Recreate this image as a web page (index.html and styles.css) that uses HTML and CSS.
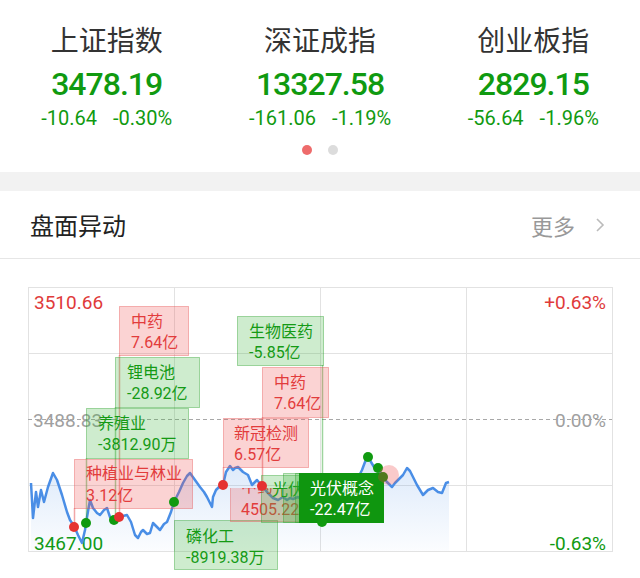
FILE: index.html
```html
<!DOCTYPE html>
<html lang="zh-CN">
<head>
    <meta charset="UTF-8">
    <meta name="viewport" content="width=device-width, initial-scale=1.0">
    <title>盘面异动</title>
    <link rel="stylesheet" href="styles.css">
</head>
<body>
    <div class="indices">
        <div class="index">
            <div class="index-name">上证指数</div>
            <div class="index-value">3478.19</div>
            <div class="index-change"><span>-10.64</span><span>-0.30%</span></div>
        </div>
        <div class="index">
            <div class="index-name">深证成指</div>
            <div class="index-value">13327.58</div>
            <div class="index-change"><span>-161.06</span><span>-1.19%</span></div>
        </div>
        <div class="index">
            <div class="index-name">创业板指</div>
            <div class="index-value">2829.15</div>
            <div class="index-change"><span>-56.64</span><span>-1.96%</span></div>
        </div>
    </div>

    <div class="pager">
        <span class="dot active"></span>
        <span class="dot"></span>
    </div>

    <div class="band"></div>

    <div class="section-head">
        <h2 class="section-title">盘面异动</h2>
        <a class="more">更多
            <svg width="10" height="16" viewBox="0 0 10 16"><path d="M2 2 L8 8 L2 14" /></svg>
        </a>
    </div>

    <!-- intraday chart, viewBox uses page coordinates -->
    <svg class="chart" width="640" height="319" viewBox="0 259 640 319">
        <defs>
            <linearGradient id="area" x1="0" y1="0" x2="0" y2="1">
                <stop offset="0" stop-color="#4a8ee6" stop-opacity="0.2"/>
                <stop offset="1" stop-color="#4a8ee6" stop-opacity="0.02"/>
            </linearGradient>
            <clipPath id="clip-low"><rect x="220" y="488" width="79" height="40"/></clipPath>
        </defs>

        <!-- grid -->
        <rect class="grid" x="28.5" y="287.5" width="584" height="264"/>
        <line class="grid" x1="174.5" y1="287" x2="174.5" y2="551"/>
        <line class="grid" x1="320.5" y1="287" x2="320.5" y2="551"/>
        <line class="grid" x1="466.5" y1="287" x2="466.5" y2="551"/>
        <line class="grid" x1="28" y1="353.5" x2="612" y2="353.5"/>
        <line class="grid" x1="28" y1="485.5" x2="612" y2="485.5"/>

        <!-- axis labels -->
        <text class="axis up" x="34" y="302">3510.66</text>
        <text class="axis up end" x="606" y="302">+0.63%</text>
        <text class="axis flat" x="33" y="420">3488.83</text>
        <text class="axis flat end" x="606" y="420">0.00%</text>
        <text class="axis down" x="34" y="543">3467.00</text>
        <text class="axis down end" x="606" y="543">-0.63%</text>
        <line class="base" x1="28" y1="419.5" x2="612" y2="419.5"/>

        <!-- price line -->
        <path class="area" d="M31 483 L33 518 L36 492 L38 507 L41 490 L44 502 L48 487 L53 473 L57 480 L62 495 L67 512 L70 520 L74 526 L78 535 L82 543 L85 530 L86 523 L90 500 L93 508 L97 513 L100 515 L104 510 L107 508 L110 517 L114 520 L119 517 L123 516 L127 515 L131 522 L135 535 L138 538 L141 532 L143 530 L147 534 L150 533 L153 523 L157 527 L160 530 L164 524 L167 522 L171 512 L174 502 L179 492 L183 483 L187 476 L190 473 L195 480 L200 487 L204 492 L207 497 L210 503 L212 507 L213 497 L216 490 L219 487 L223 485 L226 472 L230 466 L233 470 L235 468 L238 467 L243 472 L248 475 L250 480 L252 485 L255 482 L257 480 L262 486 L267 492 L273 498 L278 500 L283 497 L287 500 L290 498 L293 499 L298 497 L305 502 L312 508 L318 516 L322 521 L328 512 L336 500 L345 492 L353 485 L358 478 L362 470 L365 462 L368 457 L371 462 L374 467 L378 468 L383 477 L387 482 L392 487 L395 483 L398 480 L403 475 L407 468 L410 471 L413 477 L417 485 L420 490 L423 495 L428 490 L433 488 L438 492 L442 493 L446 483 L449 482 L449 551 L31 551 Z"/>
        <polyline class="price" points="31,483 33,518 36,492 38,507 41,490 44,502 48,487 53,473 57,480 62,495 67,512 70,520 74,526 78,535 82,543 85,530 86,523 90,500 93,508 97,513 100,515 104,510 107,508 110,517 114,520 119,517 123,516 127,515 131,522 135,535 138,538 141,532 143,530 147,534 150,533 153,523 157,527 160,530 164,524 167,522 171,512 174,502 179,492 183,483 187,476 190,473 195,480 200,487 204,492 207,497 210,503 212,507 213,497 216,490 219,487 223,485 226,472 230,466 233,470 235,468 238,467 243,472 248,475 250,480 252,485 255,482 257,480 262,486 267,492 273,498 278,500 283,497 287,500 290,498 293,499 298,497 305,502 312,508 318,516 322,521 328,512 336,500 345,492 353,485 358,478 362,470 365,462 368,457 371,462 374,467 378,468 383,477 387,482 392,487 395,483 398,480 403,475 407,468 410,471 413,477 417,485 420,490 423,495 428,490 433,488 438,492 442,493 446,483 449,482"/>

        <!-- connectors from tags to their points -->
        <line class="link up" x1="119.5" y1="355" x2="119.5" y2="517"/>
        <line class="link down" x1="115.5" y1="407" x2="115.5" y2="520"/>
        <line class="link down" x1="86.5" y1="458" x2="86.5" y2="523"/>
        <line class="link up" x1="74.5" y1="508" x2="74.5" y2="526"/>
        <line class="link down" x1="322.5" y1="365" x2="322.5" y2="521"/>
        <line class="link up" x1="262.5" y1="417" x2="262.5" y2="486"/>
        <line class="link up" x1="223.5" y1="467" x2="223.5" y2="485"/>

        <!-- fund flow tags -->
        <g class="tag up">
            <rect x="119.5" y="306.5" width="69" height="49"/>
            <text x="131" y="321">中药</text><text x="131" y="342">7.64亿</text>
        </g>
        <g class="tag down">
            <rect x="115.5" y="357.5" width="84" height="50"/>
            <text x="127" y="372">锂电池</text><text x="127" y="393">-28.92亿</text>
        </g>
        <g class="tag down">
            <rect x="86.5" y="408.5" width="102" height="50"/>
            <text x="98" y="423">养殖业</text><text x="98" y="444">-3812.90万</text>
        </g>
        <g class="tag up">
            <rect x="74.5" y="459.5" width="118" height="49"/>
            <text x="86" y="473">种植业与林业</text><text x="86" y="495">3.12亿</text>
        </g>
        <g class="tag down">
            <rect x="237.5" y="316.5" width="86" height="49"/>
            <text x="249" y="331">生物医药</text><text x="249" y="352">-5.85亿</text>
        </g>
        <g class="tag up">
            <rect x="262.5" y="367.5" width="66" height="50"/>
            <text x="274" y="382">中药</text><text x="274" y="403">7.64亿</text>
        </g>
        <g class="tag up">
            <rect x="223.5" y="418.5" width="85" height="49"/>
            <text x="234" y="433">新冠检测</text><text x="234" y="454">6.57亿</text>
        </g>
        <g class="tag down">
            <rect x="174.5" y="520.5" width="103" height="49"/>
            <text x="186" y="536">磷化工</text><text x="186" y="557">-8919.38万</text>
        </g>
        <g class="tag up" clip-path="url(#clip-low)">
            <rect x="230.5" y="470.5" width="95" height="51"/>
            <text x="241" y="486">中药</text><text x="241" y="509">4505.22</text>
        </g>
        <g class="tag down">
            <rect x="261.5" y="475.5" width="90" height="47"/>
            <text x="272" y="489">光伏</text>
        </g>
        <g class="tag down">
            <rect x="283.5" y="473.5" width="90" height="49"/>
        </g>
        <g class="tag down">
            <rect x="295.5" y="473.5" width="88" height="49"/>
        </g>
        <g class="tag active">
            <rect x="299" y="473" width="85" height="50"/>
            <text x="310" y="488">光伏概念</text><text x="310" y="509">-22.47亿</text>
        </g>

        <!-- event points -->
        <circle class="pt up" cx="74" cy="527" r="5"/>
        <circle class="pt down" cx="86" cy="523" r="5"/>
        <circle class="pt down" cx="114" cy="520" r="5"/>
        <circle class="pt up" cx="119" cy="517" r="5"/>
        <circle class="pt down" cx="174" cy="502" r="5"/>
        <circle class="pt up" cx="223" cy="485" r="5"/>
        <circle class="pt up" cx="262" cy="486" r="5"/>
        <circle class="pt down" cx="322" cy="522" r="5"/>
        <circle class="pt down" cx="368" cy="457" r="5"/>
        <circle class="pt down" cx="378" cy="468" r="5"/>
        <circle class="halo" cx="389" cy="475" r="10"/>
        <circle class="pt focus" cx="383" cy="477" r="5"/>
    </svg>
</body>
</html>
```

FILE: styles.css
```css
* {
    box-sizing: border-box;
}

body {
    margin: 0;
    width: 640px;
    background: #fff;
    font-family: Roboto, "Noto Sans CJK SC", sans-serif;
    color: #333;
}

.indices {
    display: flex;
    padding-top: 22px;
}

.index {
    flex: 1;
    text-align: center;
}

.index-name {
    font-family: "Noto Sans CJK SC", sans-serif;
    font-size: 28px;
    line-height: 34px;
    color: #333;
}

.index-value {
    margin-top: 10px;
    font-size: 32px;
    line-height: 36px;
    font-weight: 500;
    letter-spacing: -1px;
    color: #109a10;
}

.index-change {
    display: flex;
    justify-content: center;
    gap: 16px;
    margin-top: 4px;
    font-size: 20px;
    line-height: 24px;
    color: #109a10;
}

.pager {
    display: flex;
    justify-content: center;
    gap: 16px;
    height: 10px;
    margin: 15px 0 17px;
}

.dot {
    width: 10px;
    height: 10px;
    border-radius: 50%;
    background: #dcdcdc;
}

.dot.active {
    background: #ee6b6b;
}

.band {
    height: 19px;
    background: #f2f2f2;
}

.section-head {
    display: flex;
    align-items: center;
    justify-content: space-between;
    height: 68px;
    padding: 0 35px 0 30px;
    border-bottom: 1px solid #e6e6e6;
}

.section-title {
    margin: 0;
    font-family: "Noto Sans CJK SC", sans-serif;
    font-size: 24px;
    font-weight: normal;
    color: #222;
}

.more {
    display: flex;
    align-items: center;
    gap: 20px;
    font-family: "Noto Sans CJK SC", sans-serif;
    font-size: 22px;
    color: #999;
}

.more path {
    fill: none;
    stroke: #bbb;
    stroke-width: 1.6;
}

.chart {
    display: block;
}

.chart text {
    font-family: Roboto, "Noto Sans CJK SC", sans-serif;
    dominant-baseline: central;
}

.grid {
    fill: none;
    stroke: #e2e2e2;
    stroke-width: 1;
}

.base {
    stroke: #a8a8a8;
    stroke-dasharray: 4 3;
}

.axis {
    font-size: 19px;
}

.axis.end {
    text-anchor: end;
}

.axis.up { fill: #e03a3a; }
.axis.down { fill: #109a10; }
.axis.flat { fill: #a0a0a0; }

.area {
    fill: url(#area);
}

.price {
    fill: none;
    stroke: #4a8ee6;
    stroke-width: 2.5;
    stroke-linejoin: round;
}

.link {
    stroke-width: 1.5;
}

.link.up { stroke: rgba(230, 80, 80, 0.5); }
.link.down { stroke: rgba(40, 160, 40, 0.45); }

.tag text {
    font-size: 16px;
}

.tag.up rect {
    fill: rgba(240, 80, 80, 0.25);
    stroke: rgba(230, 80, 80, 0.4);
}

.tag.up text { fill: #e23c3c; }

.tag.down rect {
    fill: rgba(60, 180, 60, 0.25);
    stroke: rgba(40, 160, 40, 0.4);
}

.tag.down text { fill: #159a15; }

.tag.active rect {
    fill: #0f960f;
}

.tag.active text { fill: #fff; }

.pt.up { fill: #e53232; }
.pt.down { fill: #109a10; }
.pt.focus { fill: #4f7a1c; }

.halo {
    fill: rgba(240, 80, 80, 0.3);
}
```
